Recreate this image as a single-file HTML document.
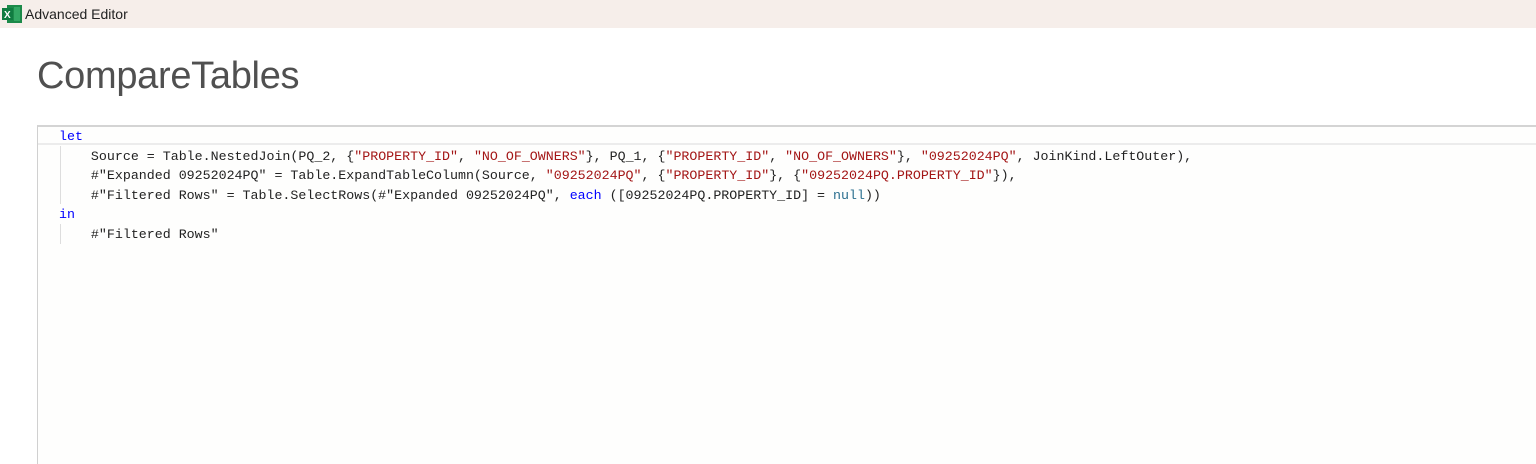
<!DOCTYPE html>
<html><head><meta charset="utf-8"><style>
body{margin:0;width:1536px;height:462px;background:#fff;position:relative;overflow:hidden;font-family:"Liberation Sans",sans-serif}
.bar{position:absolute;left:0;top:0;width:1536px;height:28px;background:#f6eeea}
.bar .t{position:absolute;left:25px;top:6px;font-size:14px;color:#222}
.h{position:absolute;left:37px;top:55px;font-size:38px;color:#505050;font-weight:300;letter-spacing:-0.3px}
.ed{position:absolute;left:37px;top:125px;width:1499px;height:337px;border-left:1px solid #d0d0d0;border-top:2px solid #d4d4d4;background:#fefefd}
.cur{position:absolute;left:0;top:0;width:1499px;height:16px;border-bottom:2px solid #ececec}
.guide{position:absolute;left:22px;width:1px;background:#ddd}
pre{position:absolute;left:21px;top:0px;margin:0;font-family:"Liberation Mono",monospace;font-size:13.3px;line-height:19.6px;color:#222}
.k{color:#0000ff}.s{color:#a31515}.n{color:#2b6f8f}
</style></head><body>
<div class="bar">
<svg style="position:absolute;left:2px;top:5px" width="20" height="18" viewBox="0 0 20 18"><rect x="5" y="0" width="15" height="18" fill="#1d8a4a"/><rect x="12" y="2" width="6" height="14" fill="#33a864"/><rect x="0" y="3" width="11" height="12" fill="#107c41"/><text x="2" y="13" font-size="10" font-weight="bold" fill="#fff" font-family="Liberation Sans">X</text></svg>
<span class="t">Advanced Editor</span></div>
<div class="h">CompareTables</div>
<div class="ed">
<div class="cur"></div>
<div class="guide" style="top:19px;height:58px"></div>
<div class="guide" style="top:97px;height:20px"></div>
<pre><span class="k">let</span>
    Source = Table.NestedJoin(PQ_2, {<span class="s">"PROPERTY_ID"</span>, <span class="s">"NO_OF_OWNERS"</span>}, PQ_1, {<span class="s">"PROPERTY_ID"</span>, <span class="s">"NO_OF_OWNERS"</span>}, <span class="s">"09252024PQ"</span>, JoinKind.LeftOuter),
    #"Expanded 09252024PQ" = Table.ExpandTableColumn(Source, <span class="s">"09252024PQ"</span>, {<span class="s">"PROPERTY_ID"</span>}, {<span class="s">"09252024PQ.PROPERTY_ID"</span>}),
    #"Filtered Rows" = Table.SelectRows(#"Expanded 09252024PQ", <span class="k">each</span> ([09252024PQ.PROPERTY_ID] = <span class="n">null</span>))
<span class="k">in</span>
    #"Filtered Rows"</pre>
</div>
</body></html>
